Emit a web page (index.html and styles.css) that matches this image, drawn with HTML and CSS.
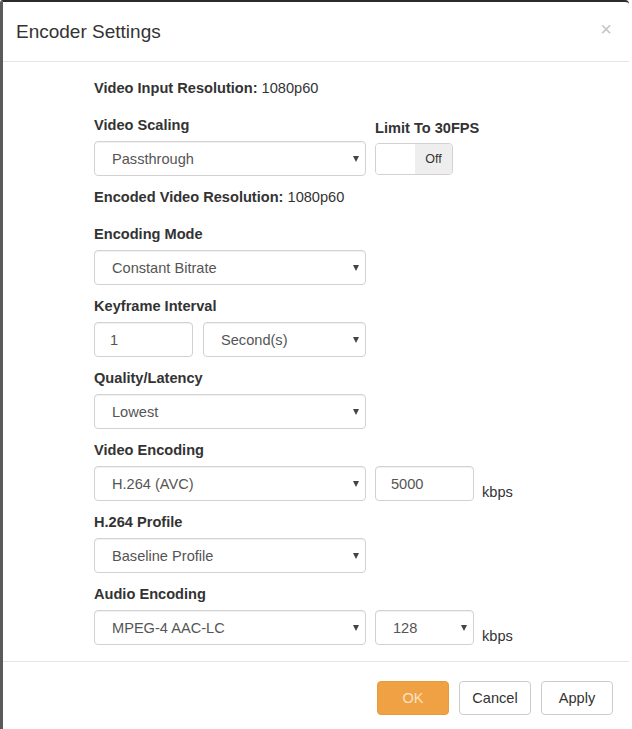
FILE: index.html
```html
<!DOCTYPE html>
<html>
<head>
<meta charset="utf-8">
<title>Encoder Settings</title>
<link rel="stylesheet" href="styles.css">
</head>
<body>
<div class="modal">
  <div class="modal-header">
    <h4 class="modal-title">Encoder Settings</h4>
    <span class="close">×</span>
  </div>
  <div class="modal-body">
    <div class="info"><b>Video Input Resolution:</b> 1080p60</div>

    <div class="row">
      <div class="group">
        <div class="label">Video Scaling</div>
        <div class="select w-wide"><span class="value">Passthrough</span><span class="caret"></span></div>
      </div>
      <div class="group fps">
        <div class="label">Limit To 30FPS</div>
        <div class="toggle"><span class="toggle-on"></span><span class="toggle-off">Off</span></div>
      </div>
    </div>

    <div class="info"><b>Encoded Video Resolution:</b> 1080p60</div>

    <div class="group">
      <div class="label">Encoding Mode</div>
      <div class="select w-wide"><span class="value">Constant Bitrate</span><span class="caret"></span></div>
    </div>

    <div class="group">
      <div class="label">Keyframe Interval</div>
      <div class="controls">
        <div class="input w-num">1</div>
        <div class="select w-unit"><span class="value">Second(s)</span><span class="caret"></span></div>
      </div>
    </div>

    <div class="group">
      <div class="label">Quality/Latency</div>
      <div class="select w-wide"><span class="value">Lowest</span><span class="caret"></span></div>
    </div>

    <div class="group">
      <div class="label">Video Encoding</div>
      <div class="controls tight">
        <div class="select w-wide"><span class="value">H.264 (AVC)</span><span class="caret"></span></div>
        <div class="input w-num">5000</div>
        <span class="unit">kbps</span>
      </div>
    </div>

    <div class="group">
      <div class="label">H.264 Profile</div>
      <div class="select w-wide"><span class="value">Baseline Profile</span><span class="caret"></span></div>
    </div>

    <div class="group last">
      <div class="label">Audio Encoding</div>
      <div class="controls tight">
        <div class="select w-wide"><span class="value">MPEG-4 AAC-LC</span><span class="caret"></span></div>
        <div class="select w-num"><span class="value">128</span><span class="caret"></span></div>
        <span class="unit">kbps</span>
      </div>
    </div>
  </div>
  <div class="modal-footer">
    <button class="btn btn-primary">OK</button>
    <button class="btn">Cancel</button>
    <button class="btn">Apply</button>
  </div>
</div>
</body>
</html>
```

FILE: styles.css
```css
html, body {
  margin: 0;
  padding: 0;
  background: #ffffff;
}

body {
  font-family: "Liberation Sans", Arial, sans-serif;
  font-size: 14.6px;
  color: #333333;
  width: 632px;
  height: 729px;
  overflow: hidden;
}

.modal {
  box-sizing: border-box;
  width: 629px;
  height: 729px;
  border-top: 2px solid #2b2b2b;
  border-left: 3px solid #5a5a5a;
  border-top-left-radius: 3px;
  border-top-right-radius: 4px;
  background: #ffffff;
  display: flex;
  flex-direction: column;
}

.modal-header {
  display: flex;
  justify-content: space-between;
  align-items: center;
  padding: 16px 17px 16px 13px;
  border-bottom: 1px solid #e5e5e5;
}

.modal-title {
  margin: 0;
  font-size: 19px;
  font-weight: normal;
  line-height: 27px;
  color: #333333;
}

.close {
  font-size: 20px;
  line-height: 20px;
  color: #c4c4c4;
  margin-top: -6px;
}

.modal-body {
  padding: 16px 16px 14px 91px;
}

.info {
  line-height: 20px;
  margin-bottom: 17px;
}

.info b {
  font-weight: bold;
}

.row {
  display: flex;
  gap: 9px;
  margin-bottom: 11px;
}

.row .group {
  margin-bottom: 0;
}

.group {
  margin-bottom: 11px;
}

.group.last {
  margin-bottom: 0;
}

.label {
  font-weight: bold;
  line-height: 20px;
  margin-bottom: 6px;
}

.fps {
  padding-top: 3px;
}

.fps .label {
  margin-bottom: 5px;
}

.controls {
  display: flex;
  gap: 10px;
}

.controls.tight {
  gap: 9px;
}

.select, .input {
  box-sizing: border-box;
  height: 35px;
  border: 1px solid #d2d2d2;
  border-radius: 4px;
  box-shadow: inset 0 1px 1px rgba(0, 0, 0, 0.06);
  background: #ffffff;
  color: #555555;
  display: flex;
  align-items: center;
}

.select {
  padding: 0 6px 0 17px;
  justify-content: space-between;
}

.input {
  padding: 0 15px;
}

.w-wide { width: 272px; }
.w-unit { width: 163px; }
.w-num { width: 99px; }

.caret {
  width: 0;
  height: 0;
  border-left: 3px solid transparent;
  border-right: 3px solid transparent;
  border-top: 6px solid #444444;
  margin-top: 1px;
}

.unit {
  align-self: flex-end;
  line-height: 20px;
  margin-left: -1px;
  margin-bottom: -1px;
  color: #333333;
}

.toggle {
  box-sizing: border-box;
  display: flex;
  width: 78px;
  height: 32px;
  border: 1px solid #d2d2d2;
  border-radius: 4px;
  overflow: hidden;
}

.toggle-on {
  width: 39px;
  background: #ffffff;
}

.toggle-off {
  flex: 1;
  background: #eeeeee;
  display: flex;
  align-items: center;
  justify-content: center;
  font-size: 12.5px;
  color: #333333;
}

.modal-footer {
  margin-top: auto;
  border-top: 1px solid #e5e5e5;
  padding: 19px 16px 0 16px;
  height: 68px;
  box-sizing: border-box;
  display: flex;
  justify-content: flex-end;
  align-items: flex-start;
  gap: 10px;
}

.btn {
  box-sizing: border-box;
  height: 34px;
  width: 72px;
  border: 1px solid #cccccc;
  border-radius: 4px;
  background: #ffffff;
  color: #333333;
  font-family: "Liberation Sans", Arial, sans-serif;
  font-size: 14.6px;
  padding: 0;
}

.btn-primary {
  background: #efa144;
  border-color: #e99a3c;
  color: #fbe2c2;
}
```
